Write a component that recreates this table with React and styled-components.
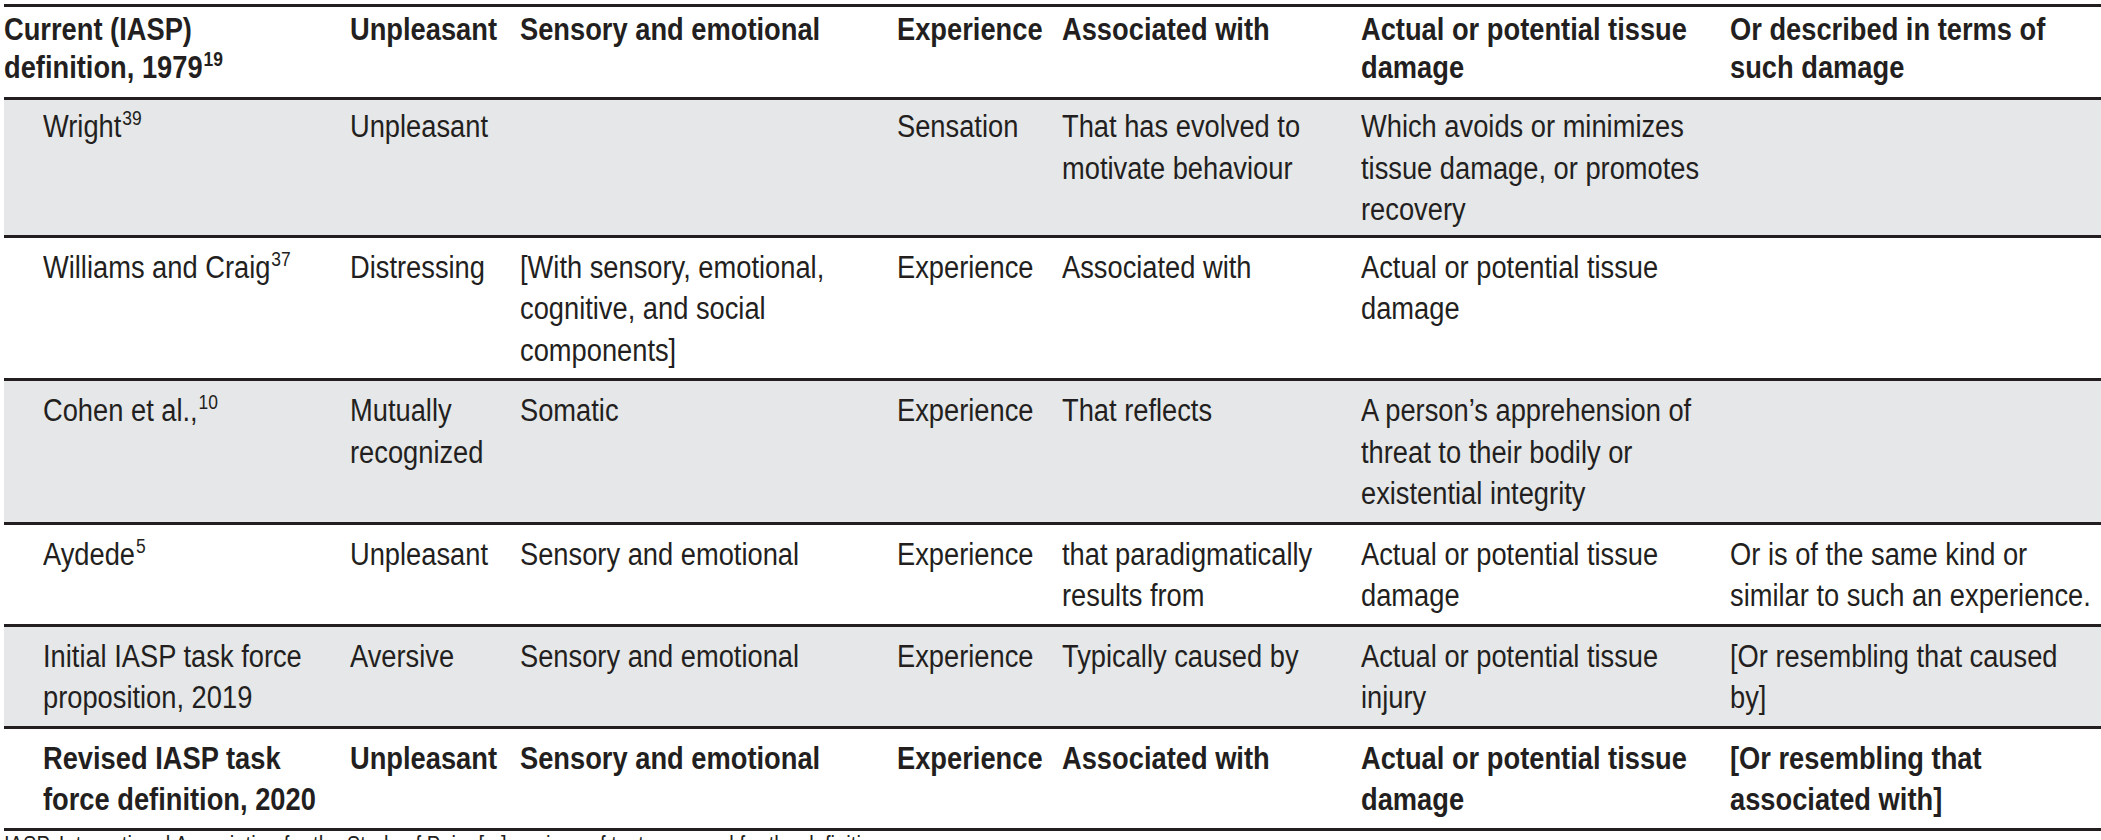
import React from 'react';
import styled, { createGlobalStyle } from 'styled-components';

const GlobalStyle = createGlobalStyle`
  html, body {
    margin: 0;
    padding: 0;
    background: #fff;
  }
  body {
    font-family: "Liberation Sans", Arial, sans-serif;
    color: #231f20;
    overflow: hidden;
  }
`;

const Page = styled.div`
  width: 2101px;
  height: 840px;
  overflow: hidden;
  padding: 4px 0 0 4px;
  box-sizing: border-box;
`;

const Table = styled.table`
  width: 2097px;
  table-layout: fixed;
  border-collapse: collapse;
  border-top: 3px solid #231f20;
  font-size: 31px;
  line-height: 41.5px;
`;

const HeadCell = styled.th`
  text-align: left;
  vertical-align: top;
  font-weight: 700;
  line-height: 38px;
  padding: 4px 0 10px;
`;

const Row = styled.tr`
  background: ${(p) => (p.shaded ? '#e6e7e8' : '#fff')};
  border-bottom: 3px solid #231f20;
  font-weight: ${(p) => (p.bold ? 700 : 400)};
`;

const Cell = styled.td`
  vertical-align: top;
  padding: ${(p) => (p.tight ? '6px' : '9px')} 0 ${(p) => (p.tight ? '4px' : '7px')}
    ${(p) => (p.first ? '39px' : '0')};
`;

/* condensed look: the type in the source is a narrow grotesque */
const Line = styled.span`
  display: block;
  white-space: nowrap;
  transform: scaleX(0.88);
  transform-origin: 0 0;
`;

const Sup = styled.sup`
  font-size: 0.64em;
  line-height: 0;
  vertical-align: 0.6em;
  margin-left: 1px;
`;

const Footnote = styled.p`
  margin: 3px 0 0;
  font-size: 23px;
  line-height: 22px;
  white-space: nowrap;
  transform: scaleX(0.88);
  transform-origin: 0 0;
`;

const widths = [346, 170, 377, 165, 299, 369, 371];

const Lines = ({ lines }) =>
  lines.map((l, i) => <Line key={i}>{l}</Line>);

const heads = [
  ['Current (IASP)', <>definition, 1979<Sup>19</Sup></>],
  ['Unpleasant'],
  ['Sensory and emotional'],
  ['Experience'],
  ['Associated with'],
  ['Actual or potential tissue', 'damage'],
  ['Or described in terms of', 'such damage'],
];

const rows = [
  {
    shaded: true,
    tight: true,
    cells: [
      [<>Wright<Sup>39</Sup></>],
      ['Unpleasant'],
      [],
      ['Sensation'],
      ['That has evolved to', 'motivate behaviour'],
      ['Which avoids or minimizes', 'tissue damage, or promotes', 'recovery'],
      [],
    ],
  },
  {
    cells: [
      [<>Williams and Craig<Sup>37</Sup></>],
      ['Distressing'],
      ['[With sensory, emotional,', 'cognitive, and social', 'components]'],
      ['Experience'],
      ['Associated with'],
      ['Actual or potential tissue', 'damage'],
      [],
    ],
  },
  {
    shaded: true,
    cells: [
      [<>Cohen et al.,<Sup>10</Sup></>],
      ['Mutually', 'recognized'],
      ['Somatic'],
      ['Experience'],
      ['That reflects'],
      ['A person\u2019s apprehension of', 'threat to their bodily or', 'existential integrity'],
      [],
    ],
  },
  {
    cells: [
      [<>Aydede<Sup>5</Sup></>],
      ['Unpleasant'],
      ['Sensory and emotional'],
      ['Experience'],
      ['that paradigmatically', 'results from'],
      ['Actual or potential tissue', 'damage'],
      ['Or is of the same kind or', 'similar to such an experience.'],
    ],
  },
  {
    shaded: true,
    cells: [
      ['Initial IASP task force', 'proposition, 2019'],
      ['Aversive'],
      ['Sensory and emotional'],
      ['Experience'],
      ['Typically caused by'],
      ['Actual or potential tissue', 'injury'],
      ['[Or resembling that caused', 'by]'],
    ],
  },
  {
    bold: true,
    cells: [
      ['Revised IASP task', 'force definition, 2020'],
      ['Unpleasant'],
      ['Sensory and emotional'],
      ['Experience'],
      ['Associated with'],
      ['Actual or potential tissue', 'damage'],
      ['[Or resembling that', 'associated with]'],
    ],
  },
];

export default function App() {
  return (
    <Page>
      <GlobalStyle />
      <Table>
        <colgroup>
          {widths.map((w, i) => (
            <col key={i} style={{ width: w }} />
          ))}
        </colgroup>
        <thead>
          <Row>
            {heads.map((h, i) => (
              <HeadCell key={i}>
                <Lines lines={h} />
              </HeadCell>
            ))}
          </Row>
        </thead>
        <tbody>
          {rows.map((r, ri) => (
            <Row key={ri} shaded={r.shaded} bold={r.bold}>
              {r.cells.map((c, ci) => (
                <Cell key={ci} first={ci === 0} tight={r.tight}>
                  <Lines lines={c} />
                </Cell>
              ))}
            </Row>
          ))}
        </tbody>
      </Table>
      <Footnote>
        IASP, International Association for the Study of Pain; [...], a piece of text proposed for the definition.
      </Footnote>
    </Page>
  );
}
